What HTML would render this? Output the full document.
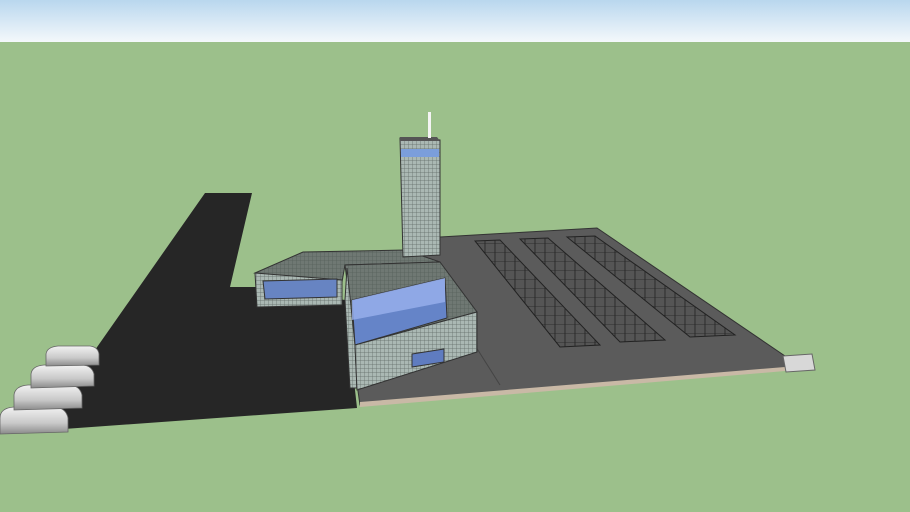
<!DOCTYPE html>
<html><head><style>html,body{margin:0;padding:0;width:910px;height:512px;overflow:hidden;background:#9cc08b}</style></head>
<body>
<svg width="910" height="512" viewBox="0 0 910 512" xmlns="http://www.w3.org/2000/svg">
<defs>
<linearGradient id="sky" x1="0" y1="0" x2="0" y2="1"><stop offset="0" stop-color="#b9d7ee"/><stop offset="1" stop-color="#f4f8fb"/></linearGradient>
<pattern id="tile" width="4" height="4" patternUnits="userSpaceOnUse"><rect width="4" height="4" fill="#aab8b3"/><path d="M0 0H4M0 0V4" stroke="#5e6a65" stroke-width="0.7"/></pattern>
<pattern id="roof" width="4" height="4" patternUnits="userSpaceOnUse"><rect width="4" height="4" fill="#6f7873"/><path d="M0 0H4M0 0V4" stroke="#55605a" stroke-width="0.8"/></pattern>
<pattern id="park" width="10" height="9" patternUnits="userSpaceOnUse"><rect width="10" height="9" fill="#555"/><path d="M0 0H10M5 0V9" stroke="#222" stroke-width="0.8"/></pattern>
<linearGradient id="cyl" x1="0" y1="0" x2="0" y2="1"><stop offset="0" stop-color="#f2f2f2"/><stop offset="0.6" stop-color="#c8c8c8"/><stop offset="1" stop-color="#8a8a8a"/></linearGradient>
</defs>
<rect width="910" height="42" fill="url(#sky)"/>
<rect y="42" width="910" height="470" fill="#9cc08b"/>
<polygon points="440,237 597,228 785,356 785,368 360,405 345,300" fill="#5b5b5b" stroke="#333" stroke-width="1"/>
<polygon points="360,402 785,367 785,371 360,407" fill="#c9b9a6"/>
<polygon points="475,241 500,240 600,345 560,347" fill="url(#park)" stroke="#222"/>
<polygon points="520,239 548,238 665,340 620,342" fill="url(#park)" stroke="#222"/>
<polygon points="567,237 595,236 735,335 690,337" fill="url(#park)" stroke="#222"/>
<line x1="440" y1="290" x2="500" y2="385" stroke="#444"/>
<polygon points="205,193 252,193 230,287 262,287 345,300 357,408 50,430 95,350" fill="#262626"/>
<g stroke="#666" stroke-width="0.8">
<path d="M0,434 V418 Q0,408 14,407 H55 Q66,408 68,418 V432 Z" fill="url(#cyl)"/>
<path d="M14,410 V395 Q15,386 28,385 H70 Q80,386 82,395 V408 Z" fill="url(#cyl)"/>
<path d="M31,388 V374 Q32,366 44,365 H83 Q92,366 94,374 V386 Z" fill="url(#cyl)"/>
<path d="M46,366 V354 Q47,347 58,346 H90 Q98,347 99,354 V365 Z" fill="url(#cyl)"/>
</g>
<polygon points="255,273 303,252 405,250 440,262 345,265 342,282" fill="url(#roof)" stroke="#333"/>
<polygon points="255,273 342,280 342,305 257,307" fill="url(#tile)" stroke="#333"/>
<polygon points="263,281 337,279 337,297 265,299" fill="#6784c2" stroke="#333"/>
<polygon points="400,138 440,140 440,255 403,257" fill="url(#tile)" stroke="#333"/>
<polygon points="400,137 437,137 440,141 400,141" fill="#555"/>
<rect x="401" y="149" width="38" height="8" fill="#7b9edb"/>
<rect x="428" y="112" width="3" height="26" fill="#f4f4f4"/>
<polygon points="345,265 440,262 477,312 355,345" fill="url(#roof)" stroke="#333"/>
<polygon points="347,268 355,345 357,388 350,388 345,300" fill="url(#tile)" stroke="#333"/>
<polygon points="352,300 445,278 447,318 355,345" fill="#6584c8" stroke="#333"/>
<polygon points="352,300 445,278 445,302 352,320" fill="#9ab2ee" opacity="0.8"/>
<polygon points="355,345 477,312 477,352 357,390" fill="url(#tile)" stroke="#333"/>
<polygon points="412,354 444,349 444,362 412,367" fill="#5f7cc0" stroke="#333"/>
<polygon points="783,356 812,354 815,370 786,372" fill="#d8d8d8" stroke="#666"/>
</svg>
</body></html>
